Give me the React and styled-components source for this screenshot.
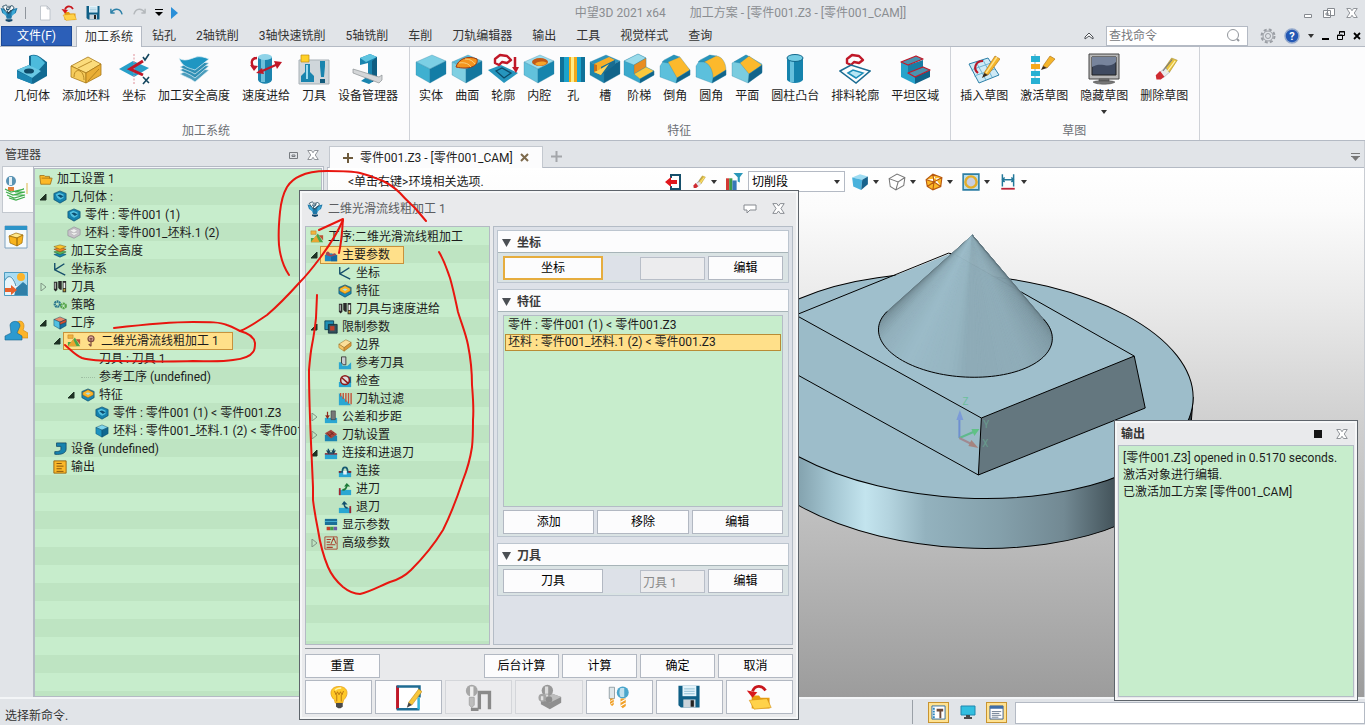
import React, { useState } from 'react';
import styled, { createGlobalStyle } from 'styled-components';

const GlobalStyle = createGlobalStyle`
    * { box-sizing: border-box; }
    body {
        margin: 0;
        background: #e1e4e8;
        font-family: Roboto, "Noto Sans CJK SC", sans-serif;
        font-size: 12px;
        line-height: 18px;
        color: #1c1c1c;
    }
    button, input, select { font: inherit; color: inherit; margin: 0; }
    ul { list-style: none; margin: 0; padding: 0; }
`;

/* ---------- drawings ---------- */

const cube = (top, left, right, line = '#2b7fa0') => (
    <g stroke={line} strokeWidth=".3" strokeLinejoin="round">
        <path d="M1 9 17 2 31 8 15 16z" fill={top} />
        <path d="M1 9 15 16 15 30 1 22z" fill={left} />
        <path d="M15 16 31 8 31 21 15 30z" fill={right} />
    </g>
);

const pencil = (
    <g>
        <path d="M16 20 27 3 32 6 20 22z" fill="#f5b52a" stroke="#a86c12" strokeWidth=".6" />
        <path d="M18 20 29 4" stroke="#ffe28a" strokeWidth="1.5" />
        <path d="M16 20 20 22 14 25z" fill="#3a2a1a" />
    </g>
);

const redLoop = <path d="M8 6 13 2 20 3 24 7 20 10 15 9 12 12 8 10z" fill="none" stroke="#c01828" strokeWidth="2.4" strokeLinejoin="round" />;

const floppy = (
    <g>
        <path d="M3 2h26v27H6l-3-3z" fill="#0f5f86" />
        <path d="M8 2h17v13H8z" fill="#e4f4fb" />
        <path d="M10 6h13M10 9h13M10 12h13" stroke="#7fb4cc" />
        <path d="M9 19h15v10H9z" fill="#c9d3da" />
        <path d="M18 20h4v8h-4z" fill="#222" />
    </g>
);

const openFolder = (
    <g>
        <path d="M7 14h9l2 3h11v13H7z" fill="#e79d10" />
        <path d="M4 20 26 18 31 29 10 31z" fill="#ffd24a" stroke="#d18b0c" strokeWidth=".7" />
        <path d="M24 8C20 1 11 1 8 9" fill="none" stroke="#c8161c" strokeWidth="3.5" />
        <path d="M1 8 14 10 8 17z" fill="#d8181c" />
    </g>
);

const logo = (
    <g>
        <path d="M1 7 9 9h14l8-2-3 9-6 3-2 7h-8l-2-7-6-3z" fill="#1f78a8" />
        <path d="M4 9l7 4 1 9-6-5zM28 9l-7 4-1 9 6-5z" fill="#3ea9d6" />
        <path d="M8 3c4-3 6 1 4 4s1 5 4 3 1-8 5-7 5 5 1 7-3 6-6 6-6-2-8-6-4-4-3-6z" fill="#f4fafc" stroke="#183d52" strokeWidth="1.6" />
        <path d="M12 12l3 4 5-5M16 3v5" fill="none" stroke="#183d52" strokeWidth="1.8" />
        <path d="M10 27h12v3l-6 2-6-2z" fill="#12466a" />
    </g>
);

const toolBits = (main, tip) => (
    <g>
        <path d="M3 3h7v15H3z" fill="#dfe7ea" stroke="#7e8b92" />
        <path d="M4 18h5v8l-2 2-3-2z" fill={tip} />
        <path d="M4 22 9 19M4 26 9 23" stroke="#fff" />
        <circle cx="21" cy="10" r="8" fill={main} />
        <path d="M18 4c-2 4-2 8 0 12h5V4z" fill="#fff" opacity=".65" />
        <path d="M18 18h7v10l-4 3-3-3z" fill={tip} />
        <path d="M18 23 25 19M18 28 25 24" stroke="#fff" strokeWidth="1.4" />
    </g>
);

const eraser = (
    <g transform="translate(7 5) scale(.72)">
        <path d="M14 13 23 0 31 3 20 20z" fill="#e9c43b" stroke="#8a7421" strokeWidth=".6" />
        <path d="M7 20 14 13 20 20 12 27z" fill="#e8eaec" stroke="#88898c" strokeWidth=".6" />
        <path d="M1 24 7 18 13 26 8 30 2 30z" fill="#cf2b31" />
        <path d="M11 18 24 2" stroke="#7a7a7a" strokeWidth="1.5" />
        <path d="M16 20 28 4" stroke="#fff3b8" strokeWidth="1.5" />
    </g>
);

// 32 unit artwork: ribbon, quick access bar, dialog tool buttons
const big = {
    logo, floppy, openFolder, eraser,
    geometry: (
        <g>
            <path d="M13 3c8-4 13 3 18 6v14L17 31 1 25v-8l12-5z" fill="#126a92" />
            <path d="M15 3c7-2 11 4 14 7l-8 9-6-6z" fill="#4dbbdc" />
            <path d="M1 17 13 12 25 18 16 25z" fill="#68c8e4" />
            <ellipse cx="13" cy="18" rx="5" ry="2.6" fill="#0e4a68" />
            <path d="M1 18 16 25v6L1 25z" fill="#1c86b2" />
        </g>
    ),
    stock: (
        <g stroke="#a87818" strokeWidth=".8" strokeLinejoin="round">
            <path d="M1 13 18 4 31 11 16 20z" fill="#fbdc7c" />
            <path d="M1 13 16 20 16 30 1 24z" fill="#f6cc5c" />
            <path d="M16 20 31 11 31 22 16 30z" fill="#e9ae36" />
            <path d="M4 24c0-10 10-8 10 3M8 15 22 8M18 28l11-12" fill="none" />
        </g>
    ),
    coord: (
        <g>
            <path d="M1 16 15 8 31 15 16 24z" fill="#289fc9" />
            <path d="M16 1v30" stroke="#e0909a" strokeDasharray="2 1.5" />
            <path d="M25 8 12 16 25 22" fill="none" stroke="#c01828" strokeWidth="3" />
            <path d="M25 4l2 3 4-6M25 24l6 6M31 24l-6 7" fill="none" stroke="#14465e" strokeWidth="1.6" />
        </g>
    ),
    safe: (
        <g stroke="#e8f4f8" strokeWidth=".7">
            <path d="M2 21 14 15 31 17 17 29C12 25 7 24 2 21z" fill="#4a9dbd" />
            <path d="M2 17 14 11 31 13 17 25C12 21 7 20 2 17z" fill="#2f8fb4" />
            <path d="M2 14 14 8 31 10 17 21C12 18 7 17 2 14z" fill="#2f8fb4" />
            <path d="M1 5c5 4 11 1 17-1 4-1 8 0 13 2L17 17C11 15 4 14 1 5z" fill="#1f96c2" />
        </g>
    ),
    feed: (
        <g>
            <path d="M8 4h14v23c-2 5-12 5-14 0z" fill="#1c84ae" />
            <path d="M11 5h4v24h-4z" fill="#90d8ec" opacity=".7" />
            <ellipse cx="15" cy="4" rx="7" ry="3" fill="#8fd3e8" />
            <path d="M7 5C1 5 1 10 3 14M10 19 28 11" fill="none" stroke="#c01828" strokeWidth="2.4" />
            <path d="M24 8 32 9 27 16zM0 12l8 1-4 5zM12 15l-6 5 8 1z" fill="#c01828" />
        </g>
    ),
    tools: (
        <g>
            <path d="M1 7h30v24H1z" fill="#cfd6da" stroke="#a9b1b6" />
            <path d="M3 2h8v7H3z" fill="#ffd128" stroke="#c08e10" strokeWidth=".7" />
            <path d="M7 11h5v8l4 4v6H3v-6l4-4z" fill="#1984ae" />
            <path d="M8 12h2v14H8z" fill="#9ddcef" />
            <path d="M22 8h5v5l-1 11h-3l-1-11z" fill="#1984ae" />
            <path d="M22 26h5v4h-5z" fill="#115a7b" />
        </g>
    ),
    machine: (
        <g>
            <path d="M8 5 18 1 25 4v22l-8 5-8-3 7-5V10l-8 2z" fill="#1984ae" />
            <path d="M8 5 18 1 25 4 14 9z" fill="#5ec4e0" />
            <path d="M20 8l5-4v22l-5 3z" fill="#0f5d82" />
            <path d="M1 16 27 24 30 22 30 27 27 30 1 20z" fill="#d4d6d8" stroke="#8b9094" strokeWidth=".7" />
        </g>
    ),
    solid: cube('#7ccfe4', '#3fb0d0', '#137da6'),
    surface: (
        <g>
            {cube('#59bcd9', '#7fcfe2', '#13769e')}
            <path d="M5 14c2-8 12-12 21-8 2 7-8 11-21 8z" fill="#f5941e" stroke="#a13a12" />
            <path d="M8 10c6-1 10 1 12 4M14 6c5 0 8 2 10 5" fill="none" stroke="#fbd07c" />
        </g>
    ),
    profile: (
        <g>
            <path d="M1 17 14 12 31 20 17 30z" fill="#2695bd" />
            <path d="M9 18 15 15 24 20 17 25z" fill="none" stroke="#0c4a68" strokeWidth="1.3" />
            {redLoop}
            <path d="M28 4v11" stroke="#c01828" strokeWidth="2.5" />
            <path d="M25 14h7l-3 6z" fill="#c01828" />
        </g>
    ),
    cavity: (
        <g>
            {cube('#9bdcec', '#62c2dc', '#1684ad')}
            <ellipse cx="17" cy="9" rx="8" ry="4" fill="#c25a17" />
            <path d="M12 11c3-3 9-3 12-1-3 3-9 4-12 1z" fill="#f6a52b" />
        </g>
    ),
    hole: (
        <g>
            <path d="M3 4h25v25H3z" fill="#1ba3cc" />
            <path d="M3 4h4v25H3zM24 4h4v25h-4z" fill="#0f7199" />
            <path d="M12 4h8v25h-8z" fill="#f2a81a" />
            <path d="M14 4h3v25h-3z" fill="#ffec84" />
        </g>
    ),
    slot: (
        <g>
            {cube('#2b93bb', '#1f86ad', '#11648a')}
            <path d="M5 11 20 4 26 7 12 14 12 22 5 19z" fill="#f8ae28" />
            <path d="M5 11 8 12 8 18 5 19z" fill="#c8701a" />
            <path d="M12 14 26 7 26 12 12 22z" fill="#1a6d92" />
            <path d="M8 18 20 11 12 22 5 19z" fill="#ffd45a" />
        </g>
    ),
    step: (
        <g stroke="#2b7fa0" strokeWidth=".3">
            <path d="M1 8 15 1 23 5 23 14 31 18 31 22 17 30 1 22z" fill="#3aa9cc" />
            <path d="M1 8 15 1 23 5 11 12z" fill="#9adbea" />
            <path d="M11 12 23 5 23 14 11 21z" fill="#e98c20" />
            <path d="M11 21 23 14 31 18 17 26z" fill="#fcc93c" />
            <path d="M17 26 31 18 31 22 17 30z" fill="#11648a" />
        </g>
    ),
    chamfer: (
        <g stroke="#2b7fa0" strokeWidth=".3">
            <path d="M1 13 5 7 15 2 31 17 31 22 17 30 1 24z" fill="#5cc0dc" />
            <path d="M3 9 15 2 21 4 9 10z" fill="#2694bb" />
            <path d="M9 9 21 4 31 17 18 25z" fill="#fcb92c" />
            <path d="M18 25 31 17 31 22 17 30z" fill="#11648a" />
        </g>
    ),
    fillet: (
        <g stroke="#2b7fa0" strokeWidth=".3">
            <path d="M1 13 5 7 15 2 31 17 31 22 17 30 1 24z" fill="#5cc0dc" />
            <path d="M3 9 15 2 22 3 10 9z" fill="#2694bb" />
            <path d="M9 9 21 3c6 0 10 7 10 14L18 25C18 17 14 10 9 9z" fill="#fcb92c" />
            <path d="M18 25 31 17 31 22 17 30z" fill="#11648a" />
        </g>
    ),
    plane: (
        <g stroke="#2b7fa0" strokeWidth=".3">
            <path d="M1 10 15 2 31 11 31 19 17 30 1 23z" fill="#7accdf" />
            <path d="M3 9 15 2 19 4 9 10z" fill="#2694bb" />
            <path d="M9 10 18 3 31 12 18 21z" fill="#fcb92c" />
            <path d="M18 21 31 12 31 20 17 30z" fill="#11648a" />
        </g>
    ),
    cylinder: (
        <g>
            <path d="M8 5h16v22c-3 4-13 4-16 0z" fill="#1683ad" />
            <path d="M11 6h4v23h-4z" fill="#7ad0e8" opacity=".8" />
            <ellipse cx="16" cy="5" rx="8" ry="3.5" fill="#72cbe3" stroke="#12688d" />
        </g>
    ),
    nest: (
        <g>
            {redLoop}
            <path d="M1 18 12 12 31 18 17 30z" fill="none" stroke="#1b6c92" strokeWidth="1.5" />
            <path d="M9 20 14 17 24 20 17 25z" fill="#b8e6f4" stroke="#1b8db8" strokeWidth="1.5" />
        </g>
    ),
    flat: (
        <g strokeLinejoin="round">
            <path d="M2 9 9 12 9 20 16 24 16 31 2 24z" fill="#27a3cb" />
            <path d="M9 12 24 7 24 15 9 20z" fill="#1a7da4" />
            <path d="M16 24 31 17 31 24 16 31z" fill="#0f6288" />
            <path d="M2 9 17 3 24 6 9 12z" fill="#4a93b0" stroke="#c01828" strokeWidth="1.3" />
            <path d="M9 20 24 14 31 17 16 24z" fill="#4a93b0" stroke="#c01828" strokeWidth="1.3" />
        </g>
    ),
    sketchIn: (
        <g>
            <path d="M1 11 20 5 31 22 11 30z" fill="#cfeaf6" stroke="#2d80a8" />
            <path d="M3 17 23 10M6 23 27 16M8 9l10 18M15 7l9 17" stroke="#6fb4d2" />
            <path d="M15 8C7 8 5 16 10 20" fill="none" stroke="#b81828" strokeWidth="2.2" />
            {pencil}
        </g>
    ),
    sketchOn: (
        <g>
            <path d="M7 1v30" stroke="#2a708c" strokeWidth=".6" />
            <path d="M3 3h9v6H3zM3 18h9v5H3zM3 25h9v6H3z" fill="#27b0d3" />
            <path d="M3 11h9v5H3z" fill="#f7a81d" />
            <path d="M15 13 22 3 27 6 19 15z" fill="#f5b52a" stroke="#a86c12" strokeWidth=".6" />
            <path d="M15 13 19 15 13 17z" fill="#3a2a1a" />
        </g>
    ),
    sketchHide: (
        <g>
            <path d="M1 1h30v25H1z" fill="#b7b7b7" stroke="#444" />
            <path d="M4 4h24v18H4z" fill="#3f4a60" stroke="#222" />
            <path d="M4 14C14 8 20 17 28 9V4H4z" fill="#77849c" />
            <path d="M11 26h10v2H11zM5 29c3-2 19-2 22 0-3 3-19 3-22 0z" fill="#777" stroke="#444" strokeWidth=".5" />
        </g>
    ),
    newDoc: <path d="M7 2h13l6 6v22H7z M20 2v6h6" fill="#fff" stroke="#b3bac2" strokeWidth="1.5" />,
    undo: <path d="M4 18 4 8M4 17 12 17M5 16C10 7 24 5 28 20" fill="none" stroke="#2c80a8" strokeWidth="3" />,
    redo: <path d="M28 18 28 8M28 17 20 17M27 16C22 7 8 5 4 20" fill="none" stroke="#b4b8bc" strokeWidth="3" />,
    bulb: (
        <g>
            <path d="M16 2c-13 0-13 12-6 18l1 4h10l1-4C29 14 29 2 16 2z" fill="#ffc928" stroke="#e09a12" />
            <path d="M10 8l2 5 2-4 2 4 2-4 2 4 2-5M13 13v9M19 13v9" fill="none" stroke="#a8620b" />
            <path d="M11 7c2-3 6-3 8-3" fill="none" stroke="#fff3b0" strokeWidth="2" />
            <path d="M12 24h9v5l-3 2h-3l-3-2z" fill="#4a4a4a" />
        </g>
    ),
    editBox: (
        <g>
            <path d="M2 2h28v28H2z" fill="#fff" />
            <path d="M3 2v28" stroke="#c01828" strokeWidth="3.5" />
            <path d="M2 3h27v13M2 30h27" fill="none" stroke="#1e6b92" strokeWidth="3" />
            <path d="M28 16v14" stroke="#35b3d8" strokeWidth="3" />
            <path d="M16 22 28 6 32 9 20 25z" fill="#f8c63a" stroke="#b07c16" strokeWidth=".6" />
            <path d="M16 22 20 25 14 28z" fill="#444" />
        </g>
    ),
    toolPath: (
        <g>
            <circle cx="8" cy="8" r="7" fill="#a7a7a7" />
            <path d="M6 3h4v12H6z" fill="#eee" />
            <path d="M5 16h6v9l-3 3-3-3z" fill="#bdbdbd" stroke="#888" strokeWidth=".6" />
            <path d="M7 30h9M17 30V10h12v20" fill="none" stroke="#8a8a8a" strokeWidth="4" />
        </g>
    ),
    toolSolid: (
        <g>
            <path d="M6 19 20 12 31 16 31 23 17 31 6 25z" fill="#8f8f8f" />
            <path d="M6 19 20 12 31 16 17 23z" fill="#bdbdbd" />
            <circle cx="14" cy="8" r="7" fill="#989898" />
            <path d="M11 3h4v9h-4zM7 13h8v5H7z" fill="#ddd" />
            <circle cx="8" cy="17" r="5" fill="#a5a5a5" />
            <circle cx="16" cy="19" r="4" fill="#8c8c8c" />
            <path d="M6 15h3v5H6z" fill="#e2e2e2" />
        </g>
    ),
    toolPair: toolBits('#4aa6cc', '#f0a029'),
};

const ground = <path d="M1 9h14v6H1z" fill="#2aa7d2" />;

// 16 unit artwork: tree nodes and view tools
const small = {
    folder: <path d="M1 4h5l1 1h5v2h3l-2 7H2L1 6zM3 7h10" fill="#fdb827" stroke="#96640a" strokeWidth=".8" />,
    part: (
        <g>
            <path d="M1 4 8 1 15 4 15 11 8 15 1 11z" fill="#1581ad" stroke="#0c4867" strokeWidth=".7" />
            <path d="M3 5 7 3 12 5 12 9 8 11 5 9z" fill="#53c0e0" />
            <path d="M5 6 8 5 12 7 9 9z" fill="#0d4e70" />
        </g>
    ),
    blank: (
        <g>
            <path d="M1 5 8 1 15 4 15 10 8 14 1 11z" fill="#c7c3ca" stroke="#8c8792" strokeWidth=".7" />
            <path d="M3 5 8 3 12 5 8 8zM4 8l4 3 5-3" fill="#eee" stroke="#aaa" strokeWidth=".6" />
        </g>
    ),
    block: (
        <g stroke="#0c4867" strokeWidth=".5">
            <path d="M1 4 8 1 15 4 8 7z" fill="#7fd6ec" />
            <path d="M1 4 8 7 8 15 1 11z" fill="#1d93bf" />
            <path d="M8 7 15 4 15 11 8 15z" fill="#0f6790" />
        </g>
    ),
    layers: (
        <g>
            <path d="M1 12 8 10 15 12 8 15z" fill="#1b84ae" stroke="#0b4560" strokeWidth=".6" />
            <path d="M1 9 8 7 15 9 8 12z" fill="#5ab55e" stroke="#26662c" strokeWidth=".6" />
            <path d="M1 6 8 4 15 6 8 9z" fill="#ef8428" stroke="#7c3a0a" strokeWidth=".6" />
            <path d="M1 3 8 1 15 3 8 6z" fill="#fcc32c" stroke="#84600a" strokeWidth=".6" />
        </g>
    ),
    axes: <path d="M2 1v8l12 6M2 9l11-7" fill="none" stroke="#164f6b" strokeWidth="1.6" />,
    bits: (
        <g fill="#2b2b2b">
            <path d="M1 2h4v9l-2 2-2-2zM6 1h4v10H8L6 9zM11 1h4v13h-4z" />
            <path d="M2 3h1v7H2zM12 3h2v6h-2z" fill="#f0f0f0" />
            <path d="M12 10h2v3h-2z" fill="#c09a3a" />
        </g>
    ),
    gears: (
        <g fill="none" strokeWidth="2.6" strokeDasharray="2 .6">
            <circle cx="5" cy="7" r="3" stroke="#28758c" />
            <circle cx="12" cy="9" r="2.6" stroke="#58a64c" />
        </g>
    ),
    process: (
        <g stroke="#123f58" strokeWidth=".5">
            <path d="M1 4 8 1 15 4 8 7z" fill="#e88a6c" />
            <path d="M1 4 8 7 8 15 1 11z" fill="#4fc0e2" />
            <path d="M8 7 15 4 15 11 8 15z" fill="#1573a0" />
            <path d="M8 7 15 4 15 7 8 10z" fill="#d8502e" />
        </g>
    ),
    op: (
        <g>
            <path d="M1 9h4l4-5 6 10H1z" fill="#49a64a" />
            <path d="M1 14 7 6l4 8z" fill="#e8a431" />
            <path d="M1 1h6v4H1z" fill="#f2b43e" stroke="#b06e1c" strokeWidth=".5" />
            <path d="M10 6h5v6z" fill="#bd5234" />
        </g>
    ),
    key: (
        <g fill="none" stroke="#7c4a3c" strokeWidth="1.6">
            <circle cx="8" cy="5" r="4" fill="#d9a79b" />
            <path d="M8 4v11M5 12l3 3M6 5h4" />
        </g>
    ),
    feature: (
        <g>
            <path d="M1 4 8 1 15 4 15 11 8 15 1 11z" fill="#1a86b2" stroke="#0c4867" strokeWidth=".7" />
            <path d="M2 5 8 2 14 5 14 8 8 11 2 8z" fill="#fbb62a" stroke="#8a4a0a" strokeWidth=".5" />
            <path d="M5 6 8 5 11 6 8 8z" fill="#a7e0ee" />
        </g>
    ),
    device: <path d="M4 1h11v7c0 4-4 7-13 6v-3c5 0 7-1 7-3V5H4z" fill="#1782ae" stroke="#0d3f5b" strokeWidth=".8" />,
    output: (
        <g>
            <path d="M1 1h14v14H1z" fill="#fbb82a" stroke="#94610b" />
            <path d="M4 4h6M4 7h8M4 10h6M4 13h8" stroke="#7a4a06" />
        </g>
    ),
    main: (
        <g>
            <path d="M1 8 8 6 15 8v7H1z" fill="#1d87c0" />
            <path d="M2 8c0-5 4-5 5-1s5-5 7 1l-6 2z" fill="#a14a56" />
            <path d="M8 10v5h7V8z" fill="#1668a0" />
        </g>
    ),
    limit: (
        <g>
            <path d="M1 1h10v10H1z" fill="#1e8fb6" stroke="#0d4058" />
            <path d="M5 5h10v10H5z" fill="#35505c" stroke="#14303c" />
            <path d="M7 7h5v5H7z" fill="#c2402c" />
        </g>
    ),
    border: (
        <g stroke="#9a6a1e" strokeWidth=".6">
            <path d="M1 7 9 2 15 5 7 11z" fill="#fbdf9a" />
            <path d="M1 7 7 11 7 15 1 11z" fill="#f6c566" />
            <path d="M7 11 15 5 15 9 7 15z" fill="#dc9838" />
        </g>
    ),
    refTool: (
        <g>
            <path d="M1 7h4v4h6l4-4v8H1z" fill="#2aa7d2" />
            <path d="M4 1h5v9H6L4 8z" fill="#c6ccd0" stroke="#333" />
        </g>
    ),
    check: (
        <g>
            {ground}
            <path d="M8 3h7v7H8z" fill="#1a6a90" />
            <circle cx="8" cy="7" r="5" fill="#ddd" stroke="#8e1c1c" strokeWidth="1.8" />
            <path d="M4 4l8 7" stroke="#8e1c1c" strokeWidth="1.8" />
        </g>
    ),
    filter: (
        <g>
            <path d="M1 1v14h14z" fill="#2aa7d2" />
            <path d="M3 1v4M6 1v7M9 1v10M12 1v12M15 1v13" stroke="#c2543c" strokeWidth="1.6" />
        </g>
    ),
    tolerance: (
        <g>
            {ground}
            <path d="M8 1h5v10H8z" fill="#777" stroke="#333" strokeWidth=".6" />
            <path d="M4 2v7M2 6l2 3 2-3" stroke="#8e2a1c" strokeWidth="1.4" fill="none" />
        </g>
    ),
    pathSet: (
        <g>
            <path d="M1 8l7-4 7 5v6H1z" fill="#1d87b2" />
            <path d="M1 6 8 2 15 7 8 12z" fill="#a9473c" />
            <path d="M4 6l4 4M7 4l4 4M11 5 6 9" stroke="#6d201a" fill="none" />
        </g>
    ),
    link: (
        <g>
            {ground}
            <path d="M1 9h14" stroke="#8e2430" strokeWidth="1.6" />
            <path d="M5 3v5M11 3v5M5 8h6" stroke="#14506e" strokeWidth="1.6" />
            <path d="M3 5l2 3 2-3M9 5l2 3 2-3" stroke="#153c50" fill="none" strokeWidth="1.2" />
        </g>
    ),
    join: (
        <g>
            {ground}
            <path d="M1 9h4c0-7 6-7 6 0h4" fill="none" stroke="#165a72" strokeWidth="2" />
            <path d="M6 8h4v4H6z" fill="#e8f4f8" />
            <path d="M12 9h3M1 9h2" stroke="#8e2430" strokeWidth="2" />
        </g>
    ),
    leadIn: (
        <g>
            {ground}
            <path d="M2 7v8" stroke="#a42430" strokeWidth="2" />
            <path d="M5 9c4 0 5-2 5-6" fill="none" stroke="#1c7a38" strokeWidth="2" />
            <path d="M7 5 10 1l4 4z" fill="#1c7a38" />
        </g>
    ),
    leadOut: (
        <g>
            {ground}
            <path d="M14 7v8" stroke="#a42430" strokeWidth="2" />
            <path d="M11 9C7 9 7 6 7 3" fill="none" stroke="#14506e" strokeWidth="2" />
            <path d="M4 5 7 1l4 4z" fill="#14506e" />
        </g>
    ),
    display: (
        <g>
            <path d="M1 1h14v7H1z" fill="#1b6f98" />
            <path d="M1 4h14" stroke="#4bb6d8" />
            <path d="M3 10h4v4H3z" fill="#c2402c" />
            <path d="M7 10h4v4H7z" fill="#3f9c48" />
            <path d="M11 10h4v4h-4z" fill="#6c5aa8" />
        </g>
    ),
    advanced: (
        <g fill="none" stroke="#a8402c">
            <path d="M1 1h14v14H1z" />
            <path d="M3 4h5M3 7h4M3 10h10M3 13h7M8 9l3-7 3 7" strokeWidth="1.2" />
        </g>
    ),
    exit: (
        <g>
            <path d="M6 4V1h9v14H6v-3" fill="none" stroke="#164f6b" strokeWidth="2" />
            <path d="M6 3v3h6v4H6v3L0 8z" fill="#e0161c" />
        </g>
    ),
    funnel: (
        <g>
            <path d="M0 5h3v11H0z" fill="#d23a34" />
            <path d="M3 5h3v11H3z" fill="#3d9a4a" />
            <path d="M6 7h4v9H6z" fill="#3878b8" />
            <path d="M7 0h9l-3 4v5l-2-1V4z" fill="#2a98ba" />
        </g>
    ),
    shaded: (
        <g>
            <path d="M1 4 8 1 15 3 10 6z" fill="#9edcf2" />
            <path d="M1 4 10 6 9 15 2 12z" fill="#4ab2dc" />
            <path d="M10 6 15 3 15 10 9 15z" fill="#17628c" />
        </g>
    ),
    wire: <path d="M1 5 8 1 15 4 14 11 7 15 2 12zM1 5 9 8 15 4M9 8 7 15" fill="#fff" stroke="#777" strokeWidth=".9" />,
    mesh: <path d="M1 6 7 1 15 4 14 12 7 15 2 12zM1 6 8 8 15 4M8 8 7 15M7 1 8 8 14 12M8 8 2 12" fill="#fcb827" stroke="#b8590f" strokeWidth="1" />,
    target: (
        <g>
            <path d="M1 1h14v14H1z" fill="#b8dff0" stroke="#2d7ea4" strokeWidth="1.4" />
            <circle cx="8" cy="8" r="5" fill="#c9cfe0" stroke="#e3ad2a" strokeWidth="2.2" />
        </g>
    ),
    measure: (
        <g fill="none">
            <path d="M3 1v11M13 1v11M3 6h10M5 4 3 6l2 2M11 4l2 2-2 2" stroke="#23789a" strokeWidth="1.3" />
            <path d="M2 14h12" stroke="#bb2438" strokeWidth="1.6" />
        </g>
    ),
    closeX: (
        <path d="M1 2h5l2 3 2-3h5l-4 6 4 6h-5l-2-3-2 3H1l4-6z" fill="#fff" stroke="#868a90" strokeWidth="1.2" />
    ),
    panelTools: (
        <g>
            <path d="M1 1h14v14H1z" fill="#fff" stroke="#2f6a9c" />
            <path d="M3 3v11" stroke="#2c88c0" strokeWidth="2" strokeDasharray="2 1" />
            <path d="M6 4h7v3h-2v7H9V7H6z" fill="#6b4a3a" />
        </g>
    ),
    monitor: (
        <g>
            <path d="M1 2h14v9H1z" fill="#32bfe0" stroke="#1f87ae" />
            <path d="M6 11h4v2h2v2H4v-2h2z" fill="#4a4a4a" />
        </g>
    ),
    panelText: (
        <g>
            <path d="M1 1h14v14H1z" fill="#fff" stroke="#3a5c8c" />
            <path d="M1 1h14v3H1z" fill="#3f6ea8" />
            <path d="M3 7h10M3 9h8M3 11h10M3 13h7" stroke="#6c7c90" />
        </g>
    ),
};

const Art = ({ name, size = 14 }) => {
    const isBig = big[name] !== undefined;
    return (
        <svg width={size} height={size} viewBox={isBig ? '0 0 32 32' : '0 0 16 16'} aria-hidden="true" style={{ flex: 'none' }}>
            {isBig ? big[name] : small[name]}
        </svg>
    );
};

/* ---------- frame ---------- */

const Page = styled.div`
    position: relative;
    display: flex;
    flex-direction: column;
    min-height: 100vh;
    overflow: hidden;
`;
const TitleBar = styled.header`
    display: grid;
    grid-template-columns: 1fr auto 1fr;
    align-items: center;
    height: 25px;
    color: #8a8d91;
`;
const QuickBar = styled.div`
    display: flex;
    align-items: center;
    gap: 8px;
`;
const IconButton = styled.button`
    display: flex;
    align-items: center;
    justify-content: center;
    padding: 0;
    border: 0;
    background: none;
`;
const Separator = styled.span`
    width: 1px;
    height: 12px;
    margin: 0 3px 0 -1px;
    background: #8f959c;
`;
const Title = styled.h1`
    display: flex;
    gap: 24px;
    margin: 0;
    font-size: 12px;
    font-weight: 400;
    padding-left: 116px;
    white-space: nowrap;
`;
const WindowButtons = styled.div`
    display: flex;
    justify-content: flex-end;
    align-items: center;
    gap: 11px;
    padding-right: 7px;
`;
const MenuBar = styled.nav`
    display: flex;
    align-items: flex-end;
    height: 22px;
    padding-left: 1px;
    border-bottom: 1px solid #b4bac4;
`;
const FileButton = styled.button`
    width: 71px;
    height: 20px;
    margin-right: 4px;
    padding: 0;
    border: 1px solid #1d4a98;
    background: #2c5fb8;
    color: #fff;
`;
const MenuItem = styled.button`
    height: 21px;
    padding: 0 ${p => (p.$active ? 8 : 10)}px;
    margin-bottom: ${p => (p.$active ? -1 : 0)}px;
    border: solid ${p => (p.$active ? '#b4bac4' : 'transparent')};
    border-width: ${p => (p.$active ? '1px 1px 0' : '0')};
    background: ${p => (p.$active ? '#fcfcfd' : 'none')};
    color: #333;
    white-space: nowrap;
`;
const MenuTools = styled.div`
    display: flex;
    align-items: center;
    gap: 8px;
    height: 21px;
    margin-left: auto;
    padding-right: 4px;
`;
const SearchBox = styled.label`
    display: flex;
    align-items: center;
    width: 142px;
    height: 20px;
    margin: 0 4px;
    padding: 0 6px 0 2px;
    border: 1px solid #b4bac4;
    background: #fff;
    input {
        flex: 1;
        min-width: 0;
        padding: 0;
        border: 0;
        outline: 0;
        background: none;
    }
    input::placeholder { color: #77797d; }
`;

const Ribbon = styled.div`
    display: flex;
    height: 94px;
    background: #fcfcfd;
    border-bottom: 1px solid #b4bac4;
`;
const RibbonGroup = styled.section`
    display: flex;
    flex-direction: column;
    justify-content: space-between;
    padding: 6px 5px 0 ${p => p.$left || 3}px;
    border-right: 1px solid #cfd2d8;
`;
const RibbonItems = styled.div`
    display: flex;
    align-items: flex-start;
`;
const RibbonButton = styled.button`
    display: flex;
    flex-direction: column;
    align-items: center;
    min-width: 32px;
    padding: 0 6px;
    border: 0;
    background: none;
    white-space: nowrap;
    svg:first-child { margin: 0 -6px 2px; }
    svg + svg { margin-top: 5px; }
`;
const GroupName = styled.div`
    text-align: center;
    color: #6d7076;
`;

const Workspace = styled.main`
    display: flex;
    flex: 1;
    min-height: 0;
`;
const Manager = styled.aside`
    display: flex;
    flex-direction: column;
    width: 327px;
    flex: none;
`;
const ManagerHead = styled.div`
    display: flex;
    align-items: center;
    justify-content: space-between;
    height: 25px;
    padding: 3px 8px 0 5px;
    color: #3c3c3c;
`;
const HeadTools = styled.div`
    display: flex;
    align-items: center;
    gap: 9px;
`;
const ManagerBody = styled.div`
    display: flex;
    flex: 1;
    padding-right: 3px;
    min-height: 0;
`;
const SideTabs = styled.div`
    display: flex;
    flex-direction: column;
    width: 33px;
    flex: none;
    padding-left: 2px;
`;
const SideTab = styled.button`
    display: flex;
    align-items: center;
    justify-content: center;
    height: 47px;
    padding: 0 4px ${p => (p.$active ? 3 : 0)}px 0;
    border: 1px solid ${p => (p.$active ? '#c3c8cf' : 'transparent')};
    border-right: 0;
    background: ${p => (p.$active ? '#fcfcfd' : 'none')};
`;
const TreeFrame = styled.div`
    display: flex;
    flex: 1;
    min-width: 0;
    padding: 1px 1px 0 0;
    border: 1px solid #b4bac4;
    border-bottom: 0;
    background: #f4f6f8;
`;
const Tree = styled.ul`
    flex: ${p => p.$width ? 'none' : 1};
    width: ${p => p.$width ? p.$width + 'px' : 'auto'};
    min-width: 0;
    padding-top: 1px;
    overflow: hidden;
    border: 1px solid #b4bac4;
    background: repeating-linear-gradient(#c7edcc 0 18px, #bee4c2 18px 36px);
`;
const TreeRow = styled.li`
    display: flex;
    align-items: center;
    height: 18px;
    padding-left: ${p => (p.$level ? p.$level * 14 - 12 : 0)}px;
    white-space: nowrap;
`;
const Toggle = styled.span`
    display: flex;
    align-items: center;
    justify-content: center;
    width: 12px;
    flex: none;
`;
const Node = styled.span`
    display: flex;
    align-items: center;
    gap: 4px;
    height: 18px;
    padding: 0 13px 0 3px;
    border: 1px solid ${p => (p.$selected ? '#c8923c' : 'transparent')};
    background: ${p => (p.$selected ? '#ffe08a' : 'none')};
`;
const Dots = styled.i`
    width: 14px;
    border-top: 1px dotted ${p => (p.$faint ? 'transparent' : '#9fbfa3')};
`;

/* ---------- document area ---------- */

const Document = styled.section`
    display: flex;
    flex-direction: column;
    flex: 1;
    min-width: 0;
    border-right: 1px solid #c9cdd3;
`;
const DocTabs = styled.div`
    display: flex;
    align-items: flex-end;
    height: 27px;
    padding-left: 2px;
    border-bottom: 1px solid #b4bac4;
`;
const DocTab = styled.button`
    display: flex;
    align-items: center;
    justify-content: space-between;
    gap: 7px;
    height: 22px;
    margin-bottom: -1px;
    padding: 0 13px;
    border: 1px solid #c3c8cf;
    border-bottom: 0;
    background: #fcfcfd;
    white-space: nowrap;
`;
const TabAction = styled.button`
    display: flex;
    align-items: center;
    height: 21px;
    padding: 0 ${p => (p.$end ? 4 : 8)}px;
    border: 0;
    background: none;
    margin-left: ${p => (p.$end ? 'auto' : 0)};
`;
const Viewport = styled.div`
    position: relative;
    flex: 1;
    border-left: 1px solid #c3c8cf;
    background: linear-gradient(#fff 0, #fbfbfb 8%, #e9e9e9 26%, #d0d0d0 48%, #b9b9b9 72%, #9c9c9c 100%);
`;
const Scene = styled.svg`
    position: absolute;
    inset: 0;
    width: 100%;
    height: 100%;
`;
const ViewBar = styled.div`
    position: relative;
    display: grid;
    grid-template-columns: 1fr auto 1fr;
    align-items: center;
    height: 27px;
    padding: 0 14px 0 20px;
`;
const ViewTools = styled.div`
    display: flex;
    align-items: center;
    gap: 3px;
    grid-column: 2;
`;
const ViewTool = styled.button`
    display: flex;
    align-items: center;
    gap: 4px;
    width: 34px;
    margin-left: ${p => p.$left || 0}px;
    padding: 0;
    border: 0;
    background: none;
`;
const Picker = styled.div`
    display: flex;
    align-items: center;
    width: 97px;
    height: 21px;
    margin: 0 3px 0 2px;
    padding-right: 4px;
    border: 1px solid #b4bac4;
    background: #fff;
    select {
        flex: 1;
        appearance: none;
        padding: 0 3px;
        border: 0;
        outline: 0;
        background: none;
        color: #000;
    }
`;

/* ---------- floating windows ---------- */

const FloatWindow = styled.section`
    position: absolute;
    left: ${p => p.$x}px;
    top: ${p => p.$y}px;
    width: ${p => p.$w}px;
    display: flex;
    flex-direction: column;
    border: 1px solid #5e646b;
    background: #e9eaec;
    box-shadow: inset 0 0 0 2px #f6f7f8;
`;
const DialogHead = styled.div`
    display: flex;
    align-items: center;
    gap: 5px;
    height: 35px;
    padding: 0 13px 0 7px;
    color: #5b5d61;
    h2 {
        flex: 1;
        margin: 0;
        font-size: 12px;
        font-weight: 400;
    }
`;
const DialogTools = styled.div`
    display: flex;
    gap: 15px;
`;
const DialogBody = styled.div`
    display: flex;
    gap: 3px;
    height: 419px;
    margin: 0 5px;
`;
const Form = styled.div`
    display: flex;
    flex-direction: column;
    gap: 6px;
    flex: 1;
    padding: 3px;
    border: 1px solid #b4bcc6;
    background: #dde1e8;
`;
const Section = styled.section`
    border: 1px solid #bcc5cf;
`;
const SectionHead = styled.h3`
    display: flex;
    align-items: center;
    gap: 6px;
    height: 22px;
    margin: 0;
    padding: 2px 0 0 4px;
    border-bottom: 1px solid #a7b4b8;
    background: #fcfcfd;
    font-size: 12px;
    font-weight: 700;
    color: #3b3b3b;
`;
const SectionBody = styled.div`
    padding: 3px 5px 2px;
    background: #dae3e4;
`;
const FieldRow = styled.div`
    display: flex;
    align-items: center;
    gap: 3px;
    background: #dde1e8;
    margin-top: ${p => (p.$top || 0)}px;
`;
const Button = styled.button`
    flex: ${p => (p.$w ? 'none' : 1)};
    width: ${p => (p.$w ? p.$w + 'px' : 'auto')};
    height: ${p => p.$h || 24}px;
    margin-right: ${p => (p.$push ? 'auto' : 0)};
    display: flex;
    align-items: center;
    justify-content: center;
    padding: 0;
    border: ${p => (p.$focus ? '2px solid #e6ad3e' : '1px solid #b2b8c2')};
    background: #fcfcfd;
    color: #000;
    &:disabled {
        background: #ececee;
        border-color: #d4d6da;
    }
`;
const Field = styled.input`
    width: 65px;
    height: 23px;
    padding: 0 2px;
    border: 1px solid #b8bec8;
    background: #ececee;
    color: #8b8b8b;
`;
const List = styled.ul`
    height: 192px;
    padding: 1px;
    border: 1px solid #b4bcc6;
    background: #c7edcc;
`;
const ListItem = styled.li`
    height: 17px;
    padding-left: 2px;
    line-height: 15px;
    border: 1px solid ${p => (p.$selected ? '#b98c35' : 'transparent')};
    background: ${p => (p.$selected ? '#ffe08a' : 'none')};
`;
const DialogFoot = styled.div`
    display: flex;
    flex-direction: column;
    gap: 2px;
    margin: 3px 5px 5px;
    padding-top: 5px;
    border-top: 1px solid #8f959b;
`;
const FootRow = styled.div`
    display: flex;
    gap: 3px;
`;
const OutputHead = styled.div`
    display: flex;
    align-items: center;
    gap: 14px;
    height: 24px;
    padding: 1px 9px 0 6px;
    h2 {
        flex: 1;
        margin: 0;
        font-size: 12px;
        font-weight: 700;
        color: #333;
    }
`;
const OutputText = styled.div`
    height: 252px;
    margin: 0 3px 3px;
    padding: 4px 4px;
    border: 1px solid #b4bcc6;
    background: #c7edcc;
    line-height: 17px;
    p { margin: 0; }
`;

const StatusBar = styled.footer`
    display: flex;
    align-items: center;
    height: 28px;
    padding-left: 5px;
    border-top: 2px solid #f3f5f7;
    color: #333;
`;
const StatusText = styled.span`
    padding-top: 8px;
`;
const StatusTools = styled.div`
    display: flex;
    align-items: center;
    gap: 8px;
    margin-left: auto;
    padding: 0 8px 0 15px;
    border-left: 1px solid #9aa0a7;
    height: 24px;
`;
const StatusTool = styled.button`
    display: flex;
    align-items: center;
    justify-content: center;
    width: 21px;
    height: 21px;
    padding: 0;
    border: 1px solid ${p => (p.$on ? '#c89430' : 'transparent')};
    background: ${p => (p.$on ? '#ffe291' : 'none')};
`;
const CommandLine = styled.input`
    width: 350px;
    height: 22px;
    margin-top: 2px;
    border: 1px solid #b4bac4;
    background: #fff;
`;
const Markup = styled.svg`
    position: absolute;
    left: 0;
    top: 0;
    pointer-events: none;
`;

/* ---------- data ---------- */

const menus = ['加工系统', '钻孔', '2轴铣削', '3轴快速铣削', '5轴铣削', '车削', '刀轨编辑器', '输出', '工具', '视觉样式', '查询'];

const ribbon = [
    { name: '加工系统', left: 8, items: [['geometry', '几何体'], ['stock', '添加坯料'], ['coord', '坐标'], ['safe', '加工安全高度'], ['feed', '速度进给'], ['tools', '刀具'], ['machine', '设备管理器']] },
    { name: '特征', items: [['solid', '实体'], ['surface', '曲面'], ['profile', '轮廓'], ['cavity', '内腔'], ['hole', '孔'], ['slot', '槽'], ['step', '阶梯'], ['chamfer', '倒角'], ['fillet', '圆角'], ['plane', '平面'], ['cylinder', '圆柱凸台'], ['nest', '排料轮廓'], ['flat', '平坦区域']] },
    { name: '草图', items: [['sketchIn', '插入草图'], ['sketchOn', '激活草图'], ['sketchHide', '隐藏草图', true], ['eraser', '删除草图']] },
];

const managerTree = [
    { level: 0, icon: 'folder', text: '加工设置 1' },
    { level: 1, icon: 'part', text: '几何体 :', open: true },
    { level: 2, icon: 'part', text: '零件 : 零件001 (1)' },
    { level: 2, icon: 'blank', text: '坯料 : 零件001_坯料.1 (2)' },
    { level: 1, icon: 'layers', text: '加工安全高度' },
    { level: 1, icon: 'axes', text: '坐标系' },
    { level: 1, icon: 'bits', text: '刀具', open: false },
    { level: 1, icon: 'gears', text: '策略' },
    { level: 1, icon: 'process', text: '工序', open: true },
    { level: 2, icon: 'op', extra: 'key', text: '二维光滑流线粗加工 1', open: true, selected: true },
    { level: 3, faint: true, text: '刀具 : 刀具 1' },
    { level: 3, text: '参考工序 (undefined)' },
    { level: 3, icon: 'feature', text: '特征', open: true },
    { level: 4, icon: 'part', text: '零件 : 零件001 (1) < 零件001.Z3' },
    { level: 4, icon: 'block', text: '坯料 : 零件001_坯料.1 (2) < 零件001.Z3' },
    { level: 1, icon: 'device', text: '设备 (undefined)' },
    { level: 1, icon: 'output', text: '输出' },
];

const operationTree = [
    { level: 0, icon: 'op', text: '工序:二维光滑流线粗加工' },
    { level: 1, icon: 'main', text: '主要参数', open: true, selected: true },
    { level: 2, icon: 'axes', text: '坐标' },
    { level: 2, icon: 'feature', text: '特征' },
    { level: 2, icon: 'bits', text: '刀具与速度进给' },
    { level: 1, icon: 'limit', text: '限制参数', open: true },
    { level: 2, icon: 'border', text: '边界' },
    { level: 2, icon: 'refTool', text: '参考刀具' },
    { level: 2, icon: 'check', text: '检查' },
    { level: 2, icon: 'filter', text: '刀轨过滤' },
    { level: 1, icon: 'tolerance', text: '公差和步距', open: false },
    { level: 1, icon: 'pathSet', text: '刀轨设置', open: false },
    { level: 1, icon: 'link', text: '连接和进退刀', open: true },
    { level: 2, icon: 'join', text: '连接' },
    { level: 2, icon: 'leadIn', text: '进刀' },
    { level: 2, icon: 'leadOut', text: '退刀' },
    { level: 1, icon: 'display', text: '显示参数' },
    { level: 1, icon: 'advanced', text: '高级参数', open: false },
];

const viewModes = [['shaded', '着色'], ['wire', '线框'], ['mesh', '网格'], ['target', '对齐'], ['measure', '测量']];

/* ---------- components ---------- */

const Caret = () => (
    <svg width="6" height="4" viewBox="0 0 6 4" aria-hidden="true"><path d="M0 0h6L3 4z" fill="#333" /></svg>
);

const TreeView = ({ nodes, label, width }) => (
    <Tree role="tree" aria-label={label} $width={width}>
        {nodes.map((n, i) => (
            <TreeRow key={i} role="treeitem" $level={n.level} aria-level={n.level + 1} aria-selected={!!n.selected} aria-expanded={n.open}>
                {n.level > 0 && (
                    <Toggle>
                        {n.open !== undefined && (
                            <svg width="7" height="8" viewBox="0 0 7 8" aria-hidden="true">
                                {n.open ? <path d="M6 1v6H0z" fill="#1f3324" stroke="#1f3324" /> : <path d="M1 0v8l5-4z" fill="none" stroke="#7f9483" />}
                            </svg>
                        )}
                    </Toggle>
                )}
                <Node $selected={n.selected}>
                    {n.icon ? <Art name={n.icon} /> : <Dots $faint={n.faint} />}
                    {n.extra && <Art name={n.extra} size={12} />}
                    {n.text}
                </Node>
            </TreeRow>
        ))}
    </Tree>
);

// colour along the cone's base, left rim to right rim
const coneStops = [
    [0, [92, 112, 121]], [0.06, [118, 143, 153]], [0.18, [145, 175, 187]], [0.32, [155, 187, 200]],
    [0.46, [150, 181, 193]], [0.5, [142, 171, 183]], [0.7, [143, 172, 184]], [0.86, [128, 155, 166]], [0.95, [112, 136, 146]], [1, [95, 116, 125]],
];

const coneColor = t => {
    const i = Math.max(1, coneStops.findIndex(s => s[0] >= t));
    const [a, ca] = coneStops[i - 1];
    const [b, cb] = coneStops[i];
    const k = (t - a) / (b - a);
    return `rgb(${ca.map((v, n) => Math.round(v + (cb[n] - v) * k)).join(',')})`;
};

const basePoint = t => {
    const angle = Math.PI + 0.45 - t * (Math.PI + 0.9);
    const dx = 87 * Math.cos(angle);
    return [965 + dx, 334 + dx * 0.05 + 43 * Math.sin(angle)];
};

const Cone = () => {
    const count = 80;
    const slices = [];
    const rim = [];
    for (let i = 0; i < count; i++) {
        const color = coneColor((i + 0.5) / count);
        slices.push(
            <path key={i} d={`M972 235L${basePoint(i / count)}L${basePoint((i + 1) / count)}z`} fill={color} stroke={color} strokeWidth=".6" />
        );
    }
    for (let i = 0; i <= count; i++) rim.push(basePoint(i / count).join(' '));
    return (
        <g strokeLinejoin="round">
            {slices}
            <polyline points={rim.join(' ')} fill="none" stroke="#000" />
        </g>
    );
};

const Model = () => (
    <Scene viewBox="327 168 1037 529" role="img" aria-label="零件001">
        <defs>
            <linearGradient id="rim" gradientUnits="userSpaceOnUse" x1="-231" x2="231" y1="0" y2="0">
                <stop offset="0" stopColor="#5f7782" />
                <stop offset=".15" stopColor="#86a5b1" />
                <stop offset=".22" stopColor="#a5c7d3" />
                <stop offset=".29" stopColor="#c3e4ee" />
                <stop offset=".34" stopColor="#b4d4df" />
                <stop offset=".42" stopColor="#93b2be" />
                <stop offset=".58" stopColor="#84a0ab" />
                <stop offset=".72" stopColor="#728993" />
                <stop offset=".83" stopColor="#44545b" />
                <stop offset="1" stopColor="#333f45" />
            </linearGradient>
        </defs>
        <g transform="translate(962 386) matrix(1 .05 0 1 0 0)" stroke="#000">
            <path d="M-231 0 L-227 51 A227 111 0 0 0 227 51 L231 0z" fill="url(#rim)" />
            <ellipse rx="231" ry="112" fill="#9dbdca" />
        </g>
        <g stroke="#000" strokeLinejoin="round">
            <path d="M780 321 951 253 1134 356 981 418z" fill="#9fbfcc" stroke="none" />
            <path d="M792 313 981 418 978 475 785 368z" fill="#9bbbc8" stroke="none" />
            <path d="M981 418 1134 356 1145 408 978 475z" fill="#64777f" />
            <path d="M795 315 948 253 954 254 1134 356M797 316 981 418M790 371 978 475" fill="none" />
        </g>
        <Cone />
        <g fill="none" strokeWidth="2">
            <path d="M959 438V415" stroke="#6d8fd0" />
            <path d="M956 420 959.5 410 963 420z" fill="#7c9bd8" stroke="none" />
            <path d="M959 438 973 432" stroke="#5fb98c" />
            <path d="M971 429 979 429 974 436z" fill="#5fc285" stroke="none" />
            <path d="M959 438 971 444" stroke="#a08a92" />
            <path d="M971 440 978 448 968 446z" fill="#a5847f" stroke="none" />
        </g>
        <g fill="#6cc09b" fontSize="10">
            <text x="962" y="405">Z</text>
            <text x="983" y="428" opacity=".5">Y</text>
            <text x="982" y="447" opacity=".5">X</text>
        </g>
    </Scene>
);

const SectionTitle = ({ children }) => (
    <SectionHead>
        <svg width="9" height="8" viewBox="0 0 9 8" aria-hidden="true"><path d="M0 0h9L4.500 8z" fill="#4b4f54" /></svg>
        {children}
    </SectionHead>
);

const OperationDialog = () => (
    <FloatWindow $x={299} $y={190} $w={500} role="dialog" aria-label="二维光滑流线粗加工 1">
        <DialogHead>
            <Art name="logo" size={16} />
            <h2>二维光滑流线粗加工 1</h2>
            <DialogTools>
                <IconButton aria-label="说明">
                    <svg width="14" height="12" viewBox="0 0 14 12"><path d="M1 2h12v5H7L4 10V7H1z" fill="#fff" stroke="#868a90" /></svg>
                </IconButton>
                <IconButton aria-label="关闭"><Art name="closeX" size={13} /></IconButton>
            </DialogTools>
        </DialogHead>
        <DialogBody>
            <TreeView nodes={operationTree} label="工序" width={185} />
            <Form>
                <Section>
                    <SectionTitle>坐标</SectionTitle>
                    <SectionBody>
                        <FieldRow>
                            <Button $w={100} $push $focus>坐标</Button>
                            <Field aria-label="坐标" readOnly value="" />
                            <Button $w={75}>编辑</Button>
                        </FieldRow>
                    </SectionBody>
                </Section>
                <Section>
                    <SectionTitle>特征</SectionTitle>
                    <SectionBody>
                        <List role="listbox" aria-label="特征">
                            <ListItem role="option" aria-selected="false">零件 : 零件001 (1) &lt; 零件001.Z3</ListItem>
                            <ListItem role="option" aria-selected="true" $selected>坯料 : 零件001_坯料.1 (2) &lt; 零件001.Z3</ListItem>
                        </List>
                        <FieldRow $top={3}>
                            <Button>添加</Button>
                            <Button>移除</Button>
                            <Button>编辑</Button>
                        </FieldRow>
                    </SectionBody>
                </Section>
                <Section>
                    <SectionTitle>刀具</SectionTitle>
                    <SectionBody>
                        <FieldRow>
                            <Button $w={100} $push>刀具</Button>
                            <Field aria-label="刀具" readOnly value="刀具 1" />
                            <Button $w={75}>编辑</Button>
                        </FieldRow>
                    </SectionBody>
                </Section>
            </Form>
        </DialogBody>
        <DialogFoot>
            <FootRow>
                <Button $w={75} $push>重置</Button>
                <Button $w={75}>后台计算</Button>
                <Button $w={75}>计算</Button>
                <Button $w={75}>确定</Button>
                <Button $w={75}>取消</Button>
            </FootRow>
            <FootRow>
                <Button $h={34} aria-label="提示"><Art name="bulb" size={24} /></Button>
                <Button $h={34} aria-label="编辑参数"><Art name="editBox" size={27} /></Button>
                <Button $h={34} aria-label="刀轨" disabled><Art name="toolPath" size={27} /></Button>
                <Button $h={34} aria-label="实体仿真" disabled><Art name="toolSolid" size={26} /></Button>
                <Button $h={34} aria-label="刀具"><Art name="toolPair" size={24} /></Button>
                <Button $h={34} aria-label="保存"><Art name="floppy" size={26} /></Button>
                <Button $h={34} aria-label="打开"><Art name="openFolder" size={26} /></Button>
            </FootRow>
        </DialogFoot>
    </FloatWindow>
);

const OutputWindow = () => (
    <FloatWindow $x={1114} $y={420} $w={244} aria-label="输出">
        <OutputHead>
            <h2>输出</h2>
            <IconButton aria-label="停止"><svg width="8" height="8" viewBox="0 0 8 8"><path d="M0 0h8v8H0z" fill="#151515" /></svg></IconButton>
            <IconButton aria-label="关闭"><Art name="closeX" size={12} /></IconButton>
        </OutputHead>
        <OutputText>
            <p>[零件001.Z3] opened in 0.5170 seconds.</p>
            <p>激活对象进行编辑.</p>
            <p>已激活加工方案 [零件001_CAM]</p>
        </OutputText>
    </FloatWindow>
);

const App = () => {
    const [menu, setMenu] = useState('加工系统');
    const [filter, setFilter] = useState('切削段');

    return (
        <Page>
            <GlobalStyle />
            <TitleBar>
                <QuickBar>
                    <Art name="logo" size={18} />
                    <Separator />
                    <IconButton aria-label="新建"><Art name="newDoc" size={16} /></IconButton>
                    <IconButton aria-label="打开"><Art name="openFolder" size={16} /></IconButton>
                    <IconButton aria-label="保存"><Art name="floppy" size={16} /></IconButton>
                    <IconButton aria-label="撤销"><Art name="undo" size={15} /></IconButton>
                    <IconButton aria-label="重做"><Art name="redo" size={15} /></IconButton>
                    <IconButton aria-label="更多">
                        <svg width="8" height="8" viewBox="0 0 8 8"><path d="M0 0h8v1H0zM0 3h8L4 7z" fill="#000" /></svg>
                    </IconButton>
                    <IconButton aria-label="运行">
                        <svg width="7" height="12" viewBox="0 0 7 12"><path d="M0 0v12l7-6z" fill="#2a8fd8" /></svg>
                    </IconButton>
                </QuickBar>
                <Title><span>中望3D 2021 x64</span><span>加工方案 - [零件001.Z3 - [零件001_CAM]]</span></Title>
                <WindowButtons>
                    <IconButton aria-label="最小化"><svg width="8" height="10" viewBox="0 0 8 10"><path d="M.5 6.500h7v3h-7z" fill="#fff" stroke="#868a90" /></svg></IconButton>
                    <IconButton aria-label="还原"><svg width="12" height="12" viewBox="0 0 12 12" fill="#fff" stroke="#868a90"><path d="M4.500 1.500h7v7h-7zM.5 3.500h7v7h-7zM3 6h2v2H3z" /></svg></IconButton>
                    <IconButton aria-label="退出"><Art name="closeX" size={12} /></IconButton>
                </WindowButtons>
            </TitleBar>
            <MenuBar>
                <FileButton>文件(F)</FileButton>
                {menus.map(m => (
                    <MenuItem key={m} $active={m === menu} onClick={() => setMenu(m)}>{m}</MenuItem>
                ))}
                <MenuTools>
                    <IconButton aria-label="收起"><svg width="10" height="8" viewBox="0 0 10 8"><path d="M1 5 5 1l4 4v2L5 4 1 7z" fill="#fff" stroke="#4b4f54" /></svg></IconButton>
                    <SearchBox>
                        <input type="text" placeholder="查找命令" aria-label="查找命令" />
                        <svg width="15" height="15" viewBox="0 0 15 15" fill="none" stroke="#92969c"><circle cx="7" cy="7" r="5.500" /><path d="M11 11l2 2" strokeWidth="2" /></svg>
                    </SearchBox>
                    <IconButton aria-label="设置">
                        <svg width="16" height="16" viewBox="0 0 16 16" fill="none" stroke="#9a9ea4"><circle cx="8" cy="8" r="6.500" strokeWidth="2" strokeDasharray="3 2.100" /><circle cx="8" cy="8" r="5" /><circle cx="8" cy="8" r="2.500" /></svg>
                    </IconButton>
                    <IconButton aria-label="帮助">
                        <svg width="16" height="16" viewBox="0 0 16 16"><circle cx="8" cy="8" r="7" fill="#2458b4" stroke="#94a9cc" strokeWidth="1.500" /><text x="8" y="12" textAnchor="middle" fontSize="11" fontWeight="700" fill="#fff">?</text></svg>
                    </IconButton>
                    <Caret />
                    <IconButton aria-label="最小化文档"><svg width="7" height="9" viewBox="0 0 7 9"><path d="M0 7h7v2H0z" /></svg></IconButton>
                    <IconButton aria-label="还原文档"><svg width="8" height="9" viewBox="0 0 8 9" fill="none" stroke="#000"><path d="M2.500 3V.5h5v4H6M2 1h6M.5 4h5v4.500h-5zM0 4.500h6" /></svg></IconButton>
                    <IconButton aria-label="关闭文档"><svg width="8" height="8" viewBox="0 0 8 8"><path d="M1 1l6 6M7 1 1 7" stroke="#000" strokeWidth="1.800" /></svg></IconButton>
                </MenuTools>
            </MenuBar>
            <Ribbon>
                {ribbon.map(group => (
                    <RibbonGroup key={group.name} $left={group.left} aria-label={group.name}>
                        <RibbonItems>
                            {group.items.map(([icon, text, more]) => (
                                <RibbonButton key={text}>
                                    <Art name={icon} size={32} />
                                    {text}
                                    {more && <Caret />}
                                </RibbonButton>
                            ))}
                        </RibbonItems>
                        <GroupName>{group.name}</GroupName>
                    </RibbonGroup>
                ))}
            </Ribbon>
            <Workspace>
                <Manager>
                    <ManagerHead>
                        管理器
                        <HeadTools>
                            <IconButton aria-label="停靠"><svg width="9" height="9" viewBox="0 0 9 9" fill="none" stroke="#777b80"><path d="M.5 1.500h8v6h-8zM3 4h3v1.500H3z" /></svg></IconButton>
                            <IconButton aria-label="关闭管理器"><Art name="closeX" size={12} /></IconButton>
                        </HeadTools>
                    </ManagerHead>
                    <ManagerBody>
                        <SideTabs>
                            <SideTab $active aria-label="加工管理">
                                <svg width="24" height="26" viewBox="0 0 24 26">
                                    <circle cx="7" cy="6" r="5" fill="#5a93b4" /><path d="M5 2h3v8H5z" fill="#e5f1f6" />
                                    <path d="M4 12h6v4H4z" fill="#e2803c" />
                                    <path d="M1 14l6 3 13-3M2 17l7 3 11-3M3 20l7 3 11-3M5 23l7 2 9-3M20 14l-9 3 10 0-12 3 12 0-11 3" fill="none" stroke="#3fae4c" strokeWidth="1.200" />
                                    <path d="M23 8v11" stroke="#dcb84c" />
                                </svg>
                            </SideTab>
                            <SideTab aria-label="零件库">
                                <svg width="24" height="24" viewBox="0 0 24 24">
                                    <path d="M1 1h22v22H1z" fill="#f6fafc" stroke="#7fa2c0" /><path d="M1 1h22v4H1z" fill="#2d94c8" />
                                    <path d="M5 11l7-3 7 2-6 3z" fill="#ffe78a" stroke="#9a6808" strokeWidth=".7" />
                                    <path d="M5 11l8 2v8l-7-3zM13 13l6-3-1 8-5 3z" fill="#f8b31d" stroke="#9a6808" strokeWidth=".7" />
                                </svg>
                            </SideTab>
                            <SideTab aria-label="视觉管理">
                                <svg width="24" height="24" viewBox="0 0 24 24">
                                    <path d="M0 0h24v24H0z" fill="#a9dcf2" /><path d="M0 11C5 0 10 4 13 14l6-3 5 2v11H0z" fill="#e8f5fa" />
                                    <path d="M12 16 19 10l5 4v10H10z" fill="#2f7fa8" /><path d="M0 10C4 1 9 4 12 14" fill="none" stroke="#3f86aa" />
                                    <circle cx="17" cy="5" r="4" fill="#fbb329" /><path d="M0 16h7v-3l6 5-6 5v-3H0z" fill="#e8622c" />
                                    <path d="M.5.5h23v23H.5z" fill="none" stroke="#4f9cc0" />
                                </svg>
                            </SideTab>
                            <SideTab aria-label="用户">
                                <svg width="24" height="22" viewBox="0 0 24 22">
                                    <path d="M13 2c5-3 9 2 6 8l5 3v5H12z" fill="#fcb42a" stroke="#c98410" strokeWidth=".6" />
                                    <path d="M6 5c1-5 10-5 10 1l-3 7 5 3v4H1v-4l6-3z" fill="#2c9ad0" stroke="#16638c" strokeWidth=".6" />
                                </svg>
                            </SideTab>
                        </SideTabs>
                        <TreeFrame>
                            <TreeView nodes={managerTree} label="管理器" />
                        </TreeFrame>
                    </ManagerBody>
                </Manager>
                <Document>
                    <DocTabs>
                        <DocTab>
                            <svg width="10" height="10" viewBox="0 0 10 10"><path d="M5 0v10M0 5h10" stroke="#6d5a3c" strokeWidth="2" /></svg>
                            零件001.Z3 - [零件001_CAM]
                            <svg width="9" height="9" viewBox="0 0 9 9"><path d="M1 1l7 7M8 1 1 8" stroke="#7d6a4c" strokeWidth="2" /></svg>
                        </DocTab>
                        <TabAction aria-label="新标签">
                            <svg width="11" height="11" viewBox="0 0 11 11"><path d="M5.500 0v11M0 5.500h11" stroke="#a4a6aa" strokeWidth="2" /></svg>
                        </TabAction>
                        <TabAction $end aria-label="标签列表">
                            <svg width="9" height="8" viewBox="0 0 9 8"><path d="M0 .5h9M0 3.500h9" stroke="#777" /><path d="M1 4h7L4.500 8z" fill="#777" /></svg>
                        </TabAction>
                    </DocTabs>
                    <Viewport>
                        <Model />
                        <ViewBar>
                            <span>&lt;单击右键&gt;环境相关选项.</span>
                            <ViewTools>
                                <IconButton aria-label="退出"><Art name="exit" size={16} /></IconButton>
                                <ViewTool $left={5} aria-label="删除"><Art name="eraser" size={18} /><Caret /></ViewTool>
                                <IconButton aria-label="过滤器"><Art name="funnel" size={17} /></IconButton>
                                <Picker>
                                    <select aria-label="过滤类型" value={filter} onChange={e => setFilter(e.target.value)}>
                                        <option>切削段</option>
                                        <option>刀轨</option>
                                    </select>
                                    <Caret />
                                </Picker>
                                {viewModes.map(([icon, text]) => (
                                    <ViewTool key={icon} aria-label={text}><Art name={icon} size={18} /><Caret /></ViewTool>
                                ))}
                            </ViewTools>
                        </ViewBar>
                    </Viewport>
                </Document>
            </Workspace>
            <StatusBar>
                <StatusText>选择新命令.</StatusText>
                <StatusTools>
                    <StatusTool $on aria-label="管理器面板"><Art name="panelTools" size={15} /></StatusTool>
                    <StatusTool aria-label="显示"><Art name="monitor" size={16} /></StatusTool>
                    <StatusTool $on aria-label="输出面板"><Art name="panelText" size={15} /></StatusTool>
                </StatusTools>
                <CommandLine aria-label="命令行" />
            </StatusBar>
            <OutputWindow />
            <OperationDialog />
            <Markup width="1365" height="725" viewBox="0 0 1365 725" fill="none" stroke="#e8160f" strokeWidth="2" strokeLinecap="round" strokeLinejoin="round" aria-hidden="true">
                <path d="M289 275C283 266 280 255 279 245C278 232 279 222 280 212C281 202 283 194 287 187C291 181 295 178 300 176C308 172 318 171 327 171C340 171 352 171 360 173C372 176 376 178 383 181C389 184 395 188 400 193C406 200 411 204 415 208L426 221" />
                <path d="M114 328C140 325 170 322 193 322C210 322 220 322 227 325C234 327 237 330 240 331C250 327 258 321 267 315C280 304 291 292 300 282C308 274 314 266 320 258C329 246 337 234 343 220" />
                <path d="M319 230 343 219 C342 235 341 245 339 253" />
                <path d="M240 331C248 333 254 337 255 343C255 347 255 350 253 352C250 357 242 359 233 360C220 362 207 361 193 361C165 362 140 361 117 361C104 361 92 361 82 358C75 355 73 352 65 345" />
                <path d="M439 252C445 262 447 270 450 278C454 292 456 303 458 312C462 325 466 334 468 345C471 360 472 372 472 385C473 398 474 408 473 420C473 430 473 438 472 447C470 460 467 470 463 480C457 498 450 516 443 530C432 548 421 560 411 570C404 577 397 580 390 582C380 586 370 592 360 594C353 594 348 591 343 587C336 581 331 574 328 567C323 555 320 543 318 530C315 515 314 508 313 500L313 487C311 440 309 410 309 370C310 358 311 350 312 345C314 335 315 327 316 318L317 295" />
            </Markup>
        </Page>
    );
};

export default App;
